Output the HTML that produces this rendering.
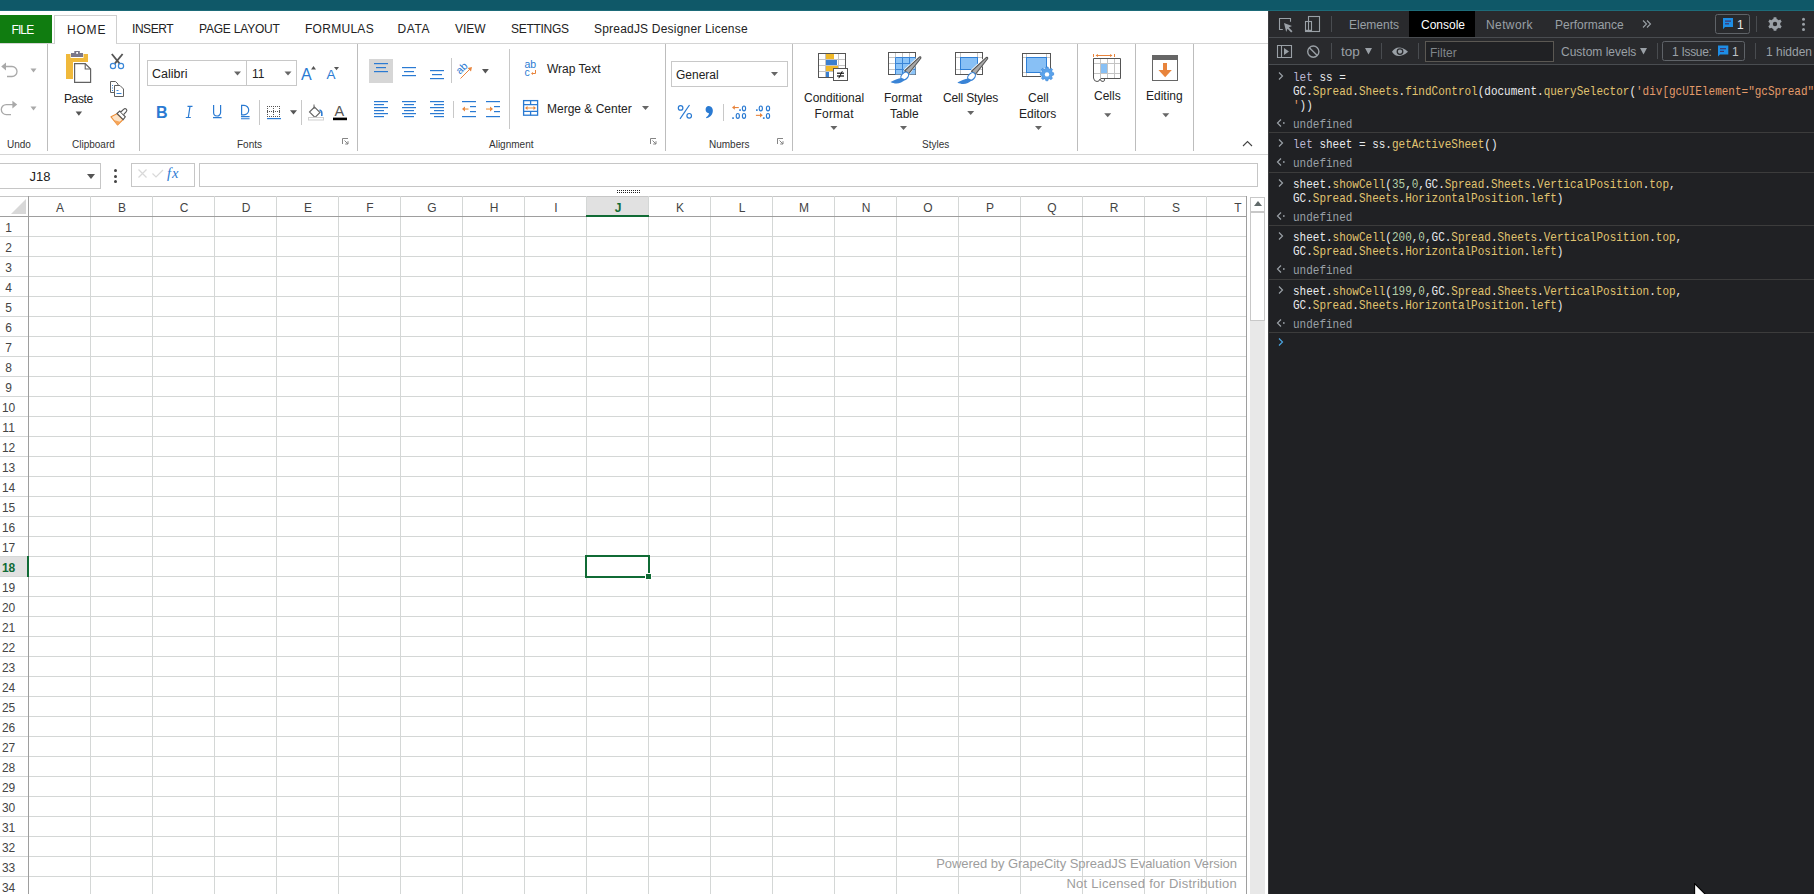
<!DOCTYPE html>
<html><head><meta charset="utf-8">
<style>
*{margin:0;padding:0;box-sizing:border-box}
html,body{width:1814px;height:894px;overflow:hidden;background:#fff;font-family:"Liberation Sans",sans-serif;position:relative}
.a{position:absolute}
.t{position:absolute;white-space:nowrap;line-height:1}
#topbar{left:0;top:0;width:1814px;height:11px;background:#0f5868;border-bottom:1px solid #1d6b79}
/* tabs */
.tab{position:absolute;top:22px;font-size:12px;color:#222;white-space:nowrap;line-height:14px}
.sep{position:absolute;width:1px;background:#bdbdbd}
.glbl{position:absolute;top:139px;font-size:10px;color:#333;white-space:nowrap;line-height:12px}
.lbl{position:absolute;font-size:12px;color:#222;white-space:nowrap;line-height:14px;margin-top:1px}
.arr{position:absolute;width:0;height:0;border-left:4px solid transparent;border-right:4px solid transparent;border-top:4px solid #666}
.colh{position:absolute;top:197px;height:19px;font-size:12px;color:#444;text-align:center;line-height:19px;padding-top:2px}
.rowh{position:absolute;left:0;width:17.2px;text-align:center;font-size:12px;color:#444;line-height:20px;height:20px;padding-top:1.5px}
/* devtools */
#dt{left:1268px;top:11px;width:546px;height:883px;background:#202124}
.dtt{position:absolute;font-size:12px;color:#9aa0a6;white-space:nowrap;line-height:14px}
.mono{position:absolute;font-family:"Liberation Mono",monospace;font-size:12.4px;line-height:14px;white-space:pre;color:#e8eaed;transform:scaleX(0.887);transform-origin:0 0;margin-top:0.7px}
.kw{color:#bcb6d2}.pr{color:#e0c470}.st{color:#e39b6a}.nu{color:#b5cea8}.un{color:#9aa0a6}
</style></head><body>
<div id="topbar" class="a"></div>

<!-- Tabs -->
<div class="a" style="left:0;top:15px;width:52px;height:28px;background:#107c10"></div>
<div class="tab" style="top:23px;left:11.5px;color:#fff;letter-spacing:-0.9px">FILE</div>
<div class="a" style="left:54px;top:15px;width:63px;height:29px;border:1px solid #cfcfcf;border-bottom:none;background:#fff"></div>
<div class="a" style="left:0;top:43px;width:54px;height:1px;background:#d4d4d4"></div>
<div class="a" style="left:116px;top:43px;width:1152px;height:1px;background:#d4d4d4"></div>
<div class="tab" style="top:23px;left:67px;letter-spacing:0.8px">HOME</div>
<div class="tab" style="left:132px;letter-spacing:-0.45px">INSERT</div>
<div class="tab" style="left:199px;letter-spacing:-0.2px">PAGE LAYOUT</div>
<div class="tab" style="left:305px;letter-spacing:0.28px">FORMULAS</div>
<div class="tab" style="left:397.5px;letter-spacing:0.6px">DATA</div>
<div class="tab" style="left:455px">VIEW</div>
<div class="tab" style="left:511px;letter-spacing:-0.28px">SETTINGS</div>
<div class="tab" style="left:594px;letter-spacing:0.2px">SpreadJS Designer License</div>

<!-- Ribbon body -->
<div class="a" style="left:0;top:154px;width:1268px;height:1px;background:#d4d4d4"></div>
<div class="sep" style="left:47px;top:44px;height:107px"></div>
<div class="sep" style="left:139px;top:44px;height:107px"></div>
<div class="sep" style="left:357px;top:44px;height:107px"></div>
<div class="sep" style="left:665px;top:44px;height:107px"></div>
<div class="sep" style="left:792px;top:44px;height:107px"></div>
<div class="sep" style="left:1077px;top:44px;height:107px"></div>
<div class="sep" style="left:1135px;top:44px;height:107px"></div>
<div class="sep" style="left:1193px;top:44px;height:107px"></div>
<div class="glbl" style="left:7px">Undo</div>
<div class="glbl" style="left:72px">Clipboard</div>
<div class="glbl" style="left:237px">Fonts</div>
<div class="glbl" style="left:489px">Alignment</div>
<div class="glbl" style="left:709px">Numbers</div>
<div class="glbl" style="left:922px">Styles</div>

<svg class="a" style="left:0;top:0" width="1268" height="155">
<defs>
<marker id="ah" markerWidth="4" markerHeight="4" refX="2" refY="2" orient="auto"><path d="M0,0 L4,2 L0,4z" fill="#e8843c"/></marker>
</defs>
<!-- Undo -->
<g fill="#a9a9a9" stroke="none">
<path d="M1.2,66.5 L6,62.6 L6,70.4z"/>
<path d="M30.5,68.5 h6 l-3,4z"/>
<path d="M17.2,104.6 L12.4,100.7 L12.4,108.5z"/>
<path d="M30.5,106.5 h6 l-3,4z"/>
</g>
<g fill="none" stroke="#a9a9a9" stroke-width="1.3">
<path d="M5.5,66.5 H12 A5,5 0 0 1 12,76.5 H7"/>
<path d="M13,104.6 H6.3 A5,5 0 0 0 6.3,114.6 H11"/>
</g>
<!-- Paste -->
<path d="M66,54 H70.5 V58 H83.5 V54 H88 V62 H73 V79 H66z" fill="#f0b93b"/>
<path d="M71,53.1 h12 v3.8 h-12z M74.3,51 h5.5 v2.5 h-5.5z" fill="#7b7889"/>
<rect x="76.2" y="52" width="1.8" height="1.8" fill="#fff"/>
<path d="M74.6,63.6 H85.2 L90.6,69 V82.4 H74.6z" fill="#fff" stroke="#626262" stroke-width="1.2"/>
<path d="M85.2,63.6 V69 H90.6" fill="none" stroke="#626262" stroke-width="1.1"/>
<path d="M75.6,111.5 h6.5 l-3.25,4.2z" fill="#555"/>
<!-- Cut -->
<g fill="none" stroke="#555" stroke-width="1.8">
<path d="M111.8,54 L119.6,63.6"/><path d="M122.6,54 L114.8,63.6"/>
</g>
<g fill="none" stroke="#3a87d8" stroke-width="1.2">
<circle cx="113" cy="66" r="2.6"/><circle cx="121" cy="66" r="2.6"/>
</g>
<!-- Copy -->
<g fill="#fff" stroke="#5f5f5f" stroke-width="1">
<path d="M110.5,81.5 H115.5 L118,84 V92.5 H110.5z"/>
<path d="M114.5,85.5 H120 L123.5,89 V96.5 H114.5z"/>
</g>
<g fill="#3a87d8"><rect x="112" y="85" width="1" height="1"/><rect x="112" y="87.5" width="1" height="1"/><rect x="112" y="90" width="1" height="1"/>
<rect x="116.5" y="90" width="2" height="1"/><rect x="116.5" y="93" width="5" height="1"/></g>
<!-- Format painter -->
<path d="M117,113.8 L111,116.8 L117.5,125 L123,119.6 Z" fill="#fde3c6" stroke="#ec8f3a" stroke-width="1.1" stroke-linejoin="round"/>
<path d="M113.6,120 L121,122 L117.5,125z" fill="#f5a55a"/>
<path d="M117,113.5 L119.8,111 L125.3,116.8 L123.2,119.6 Z" fill="#fff" stroke="#555" stroke-width="1.1"/>
<path d="M120.8,112 L123.8,109.2 A1.7,1.7 0 0 1 126.3,111.6 L123.6,114.6" fill="#fff" stroke="#555" stroke-width="1.1"/>
<!-- Font boxes -->
<rect x="147.5" y="60.5" width="149" height="25" fill="#fff" stroke="#c8c8c8"/>
<line x1="246.5" y1="60.5" x2="246.5" y2="85.5" stroke="#c8c8c8"/>
<path d="M234,71.5 h7 l-3.5,4z" fill="#666"/>
<path d="M284.5,71.5 h7 l-3.5,4z" fill="#666"/>
<!-- A+ A- -->
<text x="301" y="79.6" font-family="Liberation Sans" font-size="16" fill="#2a7ad2">A</text>
<path d="M311,69.5 L313.5,66 L316,69.5z" fill="#555"/>
<text x="326.5" y="78.9" font-family="Liberation Sans" font-size="13.5" fill="#2a7ad2">A</text>
<path d="M334,67 L339,67 L336.5,70.2z" fill="#555"/>
<!-- B I U D -->
<text x="156" y="117.9" font-family="Liberation Sans" font-weight="bold" font-size="16" fill="#2a7ad2">B</text>
<g stroke="#2a7ad2" fill="none" stroke-width="1.2">
<path d="M187.5,106.3 H192.5 M185.8,117.5 H190.8 M190,106.3 L188.3,117.5"/>
<path d="M213.6,105 V112.5 A3.5,3.5 0 0 0 220.6,112.5 V105"/>
<path d="M213,117.6 H221.6" stroke-width="1.3"/>
<path d="M241.6,105.4 H244 A4.7,4.7 0 0 1 244,114.8 H241.6z"/>
<path d="M241,116.6 H249.6 M241,118.8 H249.6" stroke-width="1.1"/>
</g>
<line x1="259.5" y1="100" x2="259.5" y2="125" stroke="#c8c8c8"/>
<!-- border icon -->
<g fill="#555">
<rect x="267" y="106" width="1" height="1"/><rect x="267" y="108" width="1" height="1"/><rect x="267" y="110" width="1" height="1"/><rect x="267" y="111" width="1" height="1"/><rect x="267" y="112" width="1" height="1"/><rect x="267" y="114" width="1" height="1"/><rect x="267" y="116" width="1" height="1"/><rect x="269" y="106" width="1" height="1"/><rect x="269" y="111" width="1" height="1"/><rect x="269" y="116" width="1" height="1"/><rect x="271" y="106" width="1" height="1"/><rect x="271" y="111" width="1" height="1"/><rect x="271" y="116" width="1" height="1"/><rect x="273" y="106" width="1" height="1"/><rect x="273" y="108" width="1" height="1"/><rect x="273" y="110" width="1" height="1"/><rect x="273" y="111" width="1" height="1"/><rect x="273" y="112" width="1" height="1"/><rect x="273" y="114" width="1" height="1"/><rect x="273" y="116" width="1" height="1"/><rect x="275" y="106" width="1" height="1"/><rect x="275" y="111" width="1" height="1"/><rect x="275" y="116" width="1" height="1"/><rect x="277" y="106" width="1" height="1"/><rect x="277" y="111" width="1" height="1"/><rect x="277" y="116" width="1" height="1"/><rect x="279" y="106" width="1" height="1"/><rect x="279" y="108" width="1" height="1"/><rect x="279" y="110" width="1" height="1"/><rect x="279" y="111" width="1" height="1"/><rect x="279" y="112" width="1" height="1"/><rect x="279" y="114" width="1" height="1"/><rect x="279" y="116" width="1" height="1"/></g>
<rect x="267" y="118" width="14" height="1.2" fill="#2a7ad2"/>
<path d="M290,110.3 h7 l-3.5,4.2z" fill="#555"/>
<line x1="301.5" y1="100" x2="301.5" y2="125" stroke="#c8c8c8"/>
<!-- fill color -->
<path d="M309.5,112 L314.5,107 L320,112.5 L315,117.5z" fill="#fff" stroke="#666" stroke-width="1.1"/>
<path d="M314,104.5 v4.5" stroke="#666" stroke-width="1"/>
<path d="M319.5,110 Q322.5,110.5 321.8,116" fill="none" stroke="#2a7ad2" stroke-width="1.6"/>
<rect x="308.5" y="117.5" width="15" height="2.5" fill="#fff" stroke="#cfcfcf" stroke-width="1"/>
<!-- font color -->
<text x="334.5" y="116" font-family="Liberation Sans" font-size="14.5" fill="#555">A</text>
<rect x="333" y="117.6" width="14" height="2.6" fill="#000"/>
<!-- launcher icons -->
<g fill="none" stroke="#777" stroke-width="0.9">
<path d="M342.5,144 V138.5 H348 M344.5,140.5 L347.8,143.8 M345.2,144 H348 V141.2"/>
<path d="M650.5,144 V138.5 H656 M652.5,140.5 L655.8,143.8 M653.2,144 H656 V141.2"/>
<path d="M777.5,144 V138.5 H783 M779.5,140.5 L782.8,143.8 M780.2,144 H783 V141.2"/>
</g>
<!-- Alignment -->
<rect x="369" y="59" width="24" height="24" fill="#d6d6d6"/>
<g fill="#2a7ad2">
<rect x="374" y="63" width="14" height="1.2"/><rect x="376" y="67" width="10" height="1.2"/><rect x="374" y="71" width="14" height="1.2"/>
<rect x="402" y="67" width="14" height="1.2"/><rect x="404" y="71" width="10" height="1.2"/><rect x="402" y="75" width="14" height="1.2"/>
<rect x="430" y="70" width="14" height="1.2"/><rect x="432" y="74" width="10" height="1.2"/><rect x="430" y="78" width="14" height="1.2"/>
<rect x="374" y="101" width="14" height="1.2"/><rect x="374" y="104" width="10" height="1.2"/><rect x="374" y="107" width="14" height="1.2"/><rect x="374" y="110" width="10" height="1.2"/><rect x="374" y="113" width="14" height="1.2"/><rect x="374" y="116" width="10" height="1.2"/>
<rect x="402" y="101" width="14" height="1.2"/><rect x="404" y="104" width="10" height="1.2"/><rect x="402" y="107" width="14" height="1.2"/><rect x="404" y="110" width="10" height="1.2"/><rect x="402" y="113" width="14" height="1.2"/><rect x="404" y="116" width="10" height="1.2"/>
<rect x="430" y="101" width="14" height="1.2"/><rect x="434" y="104" width="10" height="1.2"/><rect x="430" y="107" width="14" height="1.2"/><rect x="434" y="110" width="10" height="1.2"/><rect x="430" y="113" width="14" height="1.2"/><rect x="434" y="116" width="10" height="1.2"/>
<rect x="462" y="101" width="14" height="1.2"/><rect x="470" y="106" width="6" height="1.2"/><rect x="470" y="111" width="6" height="1.2"/><rect x="462" y="116" width="14" height="1.2"/>
<rect x="486" y="101" width="14" height="1.2"/><rect x="494" y="106" width="6" height="1.2"/><rect x="494" y="111" width="6" height="1.2"/><rect x="486" y="116" width="14" height="1.2"/>
</g>
<g fill="#e8843c">
<path d="M462,109 L465,106.5 V111.5z"/><rect x="464.5" y="108.4" width="4" height="1.3" fill="#f3a65a"/>
<path d="M493,109 L490,106.5 V111.5z"/><rect x="486" y="108.4" width="4.5" height="1.3" fill="#f3a65a"/>
</g>
<line x1="451.5" y1="58" x2="451.5" y2="83" stroke="#c8c8c8"/>
<line x1="453.5" y1="101" x2="453.5" y2="118" stroke="#c8c8c8"/>
<line x1="509.5" y1="49" x2="509.5" y2="129" stroke="#c8c8c8"/>
<!-- orientation -->
<text x="0" y="0" font-family="Liberation Sans" font-size="10.5" fill="#2a7ad2" transform="translate(460,74.8) rotate(-45)">ab</text>
<path d="M460.5,78.5 L471,68" stroke="#e8843c" stroke-width="1"/>
<path d="M472,67 L467.6,68 L471,71.4z" fill="#e8843c"/>
<path d="M482,69 h6.8 l-3.4,4.6z" fill="#555"/>
<!-- wrap text icon -->
<text x="524.5" y="68.4" font-family="Liberation Sans" font-size="10.5" fill="#2a7ad2">ab</text>
<text x="524.5" y="76" font-family="Liberation Sans" font-size="10.5" fill="#2a7ad2">c</text>
<path d="M535.5,70 V73.5 H532" fill="none" stroke="#e8843c" stroke-width="1"/>
<path d="M531,73.5 L533,72 V75z" fill="#e8843c"/>
<!-- merge icon -->
<g fill="none" stroke="#2a7ad2" stroke-width="1.3">
<rect x="523.6" y="100.6" width="14" height="14.6"/>
<path d="M523.6,104.6 H537.6 M523.6,111.4 H537.6 M530.6,100.6 V104.6 M530.6,111.4 V115.2"/>
</g>
<path d="M526,108 H535" stroke="#f3a65a" stroke-width="1.2"/>
<path d="M525,108 L527.5,106 V110z M536,108 L533.5,106 V110z" fill="#e8843c"/>
<path d="M642,106 h7 l-3.5,4z" fill="#666"/>
<!-- Numbers -->
<rect x="671.5" y="61.5" width="116" height="25" fill="#fff" stroke="#c8c8c8"/>
<path d="M771,72 h7 l-3.5,4z" fill="#666"/>
<g fill="none" stroke="#2a7ad2" stroke-width="1.2">
<circle cx="680.6" cy="107.9" r="2.3"/><circle cx="689.2" cy="115.8" r="2.3"/>
<path d="M689.5,105 L680,118.8"/>
</g>
<path d="M708.6,106 C712.5,106 713.5,110 712.5,113 C711.8,115.3 709.5,117.5 706.5,118.3 L706,117.3 C707.8,116.2 708.8,115 709,113.2 C706.8,113.3 705.6,111.6 705.6,109.6 C705.6,107.4 706.9,106 708.6,106z" fill="#2a7ad2"/>
<line x1="723.5" y1="104" x2="723.5" y2="121" stroke="#c8c8c8"/>
<g fill="none" stroke="#2a7ad2" stroke-width="1.15"><ellipse cx="744" cy="108.4" rx="1.6" ry="2.4"/><ellipse cx="737.8" cy="115.9" rx="1.6" ry="2.4"/><ellipse cx="744" cy="115.9" rx="1.6" ry="2.4"/><ellipse cx="760.8" cy="108.4" rx="1.6" ry="2.4"/><ellipse cx="768" cy="108.4" rx="1.6" ry="2.4"/><ellipse cx="768" cy="115.9" rx="1.6" ry="2.4"/></g><g fill="#2a7ad2"><rect x="739.2" y="109.3" width="1.7" height="1.6"/><rect x="732.2" y="117.3" width="1.7" height="1.6"/><rect x="756" y="109.3" width="1.7" height="1.6"/><rect x="762.9" y="117.3" width="1.7" height="1.6"/></g><g fill="#e8843c"><path d="M732,107.5 L734.8,105.3 V109.7z"/><rect x="734" y="107" width="4.8" height="1.1"/><path d="M762.8,115.3 L760,113.1 V117.5z"/><rect x="755.9" y="114.8" width="4.8" height="1.1"/></g>
<!-- Styles: Conditional format -->
<rect x="818.5" y="53.5" width="27" height="24" fill="#fff" stroke="#555" stroke-width="1"/>
<g stroke="#c4c4c4" stroke-width="1">
<path d="M825.5,54 V77 M838.5,54 V77 M819,59.5 H845 M819,65.5 H845 M819,71.5 H845"/>
</g>
<rect x="826" y="54" width="8" height="5" fill="#f0b929"/>
<rect x="826" y="60" width="11" height="5" fill="#3a7fd0"/>
<rect x="826" y="66" width="12" height="5" fill="#f0b929"/>
<rect x="826" y="72" width="3" height="5" fill="#3a7fd0"/>
<rect x="833.5" y="68.5" width="14" height="12" fill="#fff" stroke="#555" stroke-width="1"/>
<rect x="837" y="72.6" width="7" height="1.2" fill="#111"/><rect x="837" y="75.4" width="7" height="1.2" fill="#111"/><path d="M842.3,71.2 L838.8,78.2" stroke="#111" stroke-width="1"/>
<!-- Format Table -->
<rect x="888.5" y="52.5" width="27" height="22" fill="#fff" stroke="#555" stroke-width="1"/>
<rect x="895.5" y="57.5" width="20" height="17" fill="#8cc4f8"/>
<g stroke="#c4c4c4" stroke-width="1"><path d="M895.5,53 V58 M902.5,53 V58 M909.5,53 V58 M889,57.5 H895 M889,63.5 H895 M889,69.5 H895"/></g>
<g stroke="#3a84d6" stroke-width="1"><path d="M895.5,57.5 V74.5 M902.5,57.5 V74.5 M909.5,57.5 V74.5 M895.5,57.5 H915.5 M895.5,63.5 H915.5 M895.5,69.5 H915.5"/></g>
<g transform="translate(904,76.5) scale(1.2)">
<path d="M-0.2,-5.6 L12.6,-17.4 Q15.4,-18.4 14.6,-15.6 L4.6,-1.6z" fill="#fff"/>
<path d="M0.6,-4.8 L12.8,-16.2 Q14.4,-16.8 14,-15.2 L3.8,-2.2z" fill="#a9a9a9" stroke="#555" stroke-width="0.9" stroke-linejoin="round"/>
<ellipse cx="0.6" cy="-0.4" rx="3.7" ry="2.6" transform="rotate(-45 0.6 -0.4)" fill="#fff" stroke="#3a84d6" stroke-width="1"/>
<path d="M-1.8,1.2 C-5,1.6 -8.5,3 -11.2,4.6 C-7.5,6.6 -2.5,6.4 1,2.6z" fill="#3a84d6"/>
</g>
<!-- Cell styles -->
<rect x="955.5" y="52.5" width="27" height="22" fill="#fff" stroke="#555" stroke-width="1"/>
<g stroke="#c4c4c4" stroke-width="1"><path d="M960.5,53 V74 M977.5,53 V74 M956,57.5 H982 M956,69.5 H982"/></g>
<rect x="960.5" y="57.5" width="17" height="12" fill="#88c0f5" stroke="#2f7fd6" stroke-width="1"/>
<g transform="translate(970.8,77) scale(1.2)">
<path d="M-0.2,-5.6 L12.6,-17.4 Q15.4,-18.4 14.6,-15.6 L4.6,-1.6z" fill="#fff"/>
<path d="M0.6,-4.8 L12.8,-16.2 Q14.4,-16.8 14,-15.2 L3.8,-2.2z" fill="#a9a9a9" stroke="#555" stroke-width="0.9" stroke-linejoin="round"/>
<ellipse cx="0.6" cy="-0.4" rx="3.7" ry="2.6" transform="rotate(-45 0.6 -0.4)" fill="#fff" stroke="#3a84d6" stroke-width="1"/>
<path d="M-1.8,1.2 C-5,1.6 -8.5,3 -11.2,4.6 C-7.5,6.6 -2.5,6.4 1,2.6z" fill="#3a84d6"/>
</g>
<!-- Cell editors -->
<rect x="1022.5" y="53.5" width="28" height="23" fill="#fff" stroke="#555" stroke-width="1"/>
<g stroke="#c4c4c4" stroke-width="1"><path d="M1026.5,54 V76 M1046.5,54 V76 M1023,57.5 H1050 M1023,72.5 H1050"/></g>
<rect x="1026.5" y="57.5" width="20" height="15" fill="#88c0f5" stroke="#2f7fd6" stroke-width="1"/>
<g transform="translate(1047,74)">
<circle r="6.5" fill="#fff"/>
<g fill="#5aa2ea" stroke="#2f7fd6" stroke-width="0.6">
<path d="M-1.2,-6.3 H1.2 L1.6,-4.6 L3.2,-3.9 L4.6,-4.9 L5.9,-3.6 L4.9,-2.2 L5.6,-0.6 L7,-0.2 V2.2 L5.4,2.6 L4.8,4.1 L5.8,5.5 L4.1,7 L2.7,6 L1.2,6.6 L1,8.2 H-1.2 L-1.6,6.6 L-3,6 L-4.4,7 L-5.9,5.5 L-5,4.1 L-5.6,2.6 L-7,2.2 V-0.2 L-5.6,-0.6 L-5,-2.2 L-6,-3.6 L-4.6,-4.9 L-3.2,-3.9 L-1.6,-4.6z" transform="translate(0,-1) scale(0.95)"/>
</g>
<circle cx="0" cy="0.4" r="2.2" fill="#fff"/>
</g>
<!-- Cells -->
<g stroke="#e8843c" stroke-width="1"><path d="M1093.5,54 V57 M1114.5,54 V57 M1096,55.5 H1112"/></g>
<path d="M1095.5,55.5 L1098,54 V57z M1112.5,55.5 L1110,54 V57z" fill="#e8843c"/>
<g stroke="#c4c4c4" stroke-width="1"><path d="M1100.5,59 V78 M1107.5,59 V78 M1114.5,59 V78 M1094,63.5 H1120 M1094,73.5 H1120"/></g>
<rect x="1101" y="64" width="6" height="9" fill="#88c0f5"/>
<path d="M1093.5,78 V58.5 H1120.5 V78.5 H1100.5" fill="none" stroke="#555" stroke-width="1"/>
<path d="M1093.5,78 Q1094,81.5 1097,81.5 Q1099.5,81.5 1100,79 Q1100.5,81.5 1103,81.5 Q1105,81.5 1104.5,78.5" fill="none" stroke="#555" stroke-width="1"/>
<!-- Editing -->
<rect x="1152.5" y="55.5" width="25" height="25" fill="#fff" stroke="#666" stroke-width="1"/>
<rect x="1152" y="55" width="26" height="5" fill="#666"/>
<rect x="1163" y="63" width="4" height="7.5" fill="#e8843c"/>
<path d="M1158.5,70 H1171.8 L1165.15,77.2z" fill="#e8843c"/>
<!-- big button arrows -->
<g fill="#666">
<path d="M830.4,126 h7 l-3.5,4z"/>
<path d="M900,126 h7 l-3.5,4z"/>
<path d="M967.2,111 h7 l-3.5,4z"/>
<path d="M1035,126 h7 l-3.5,4z"/>
<path d="M1104.2,113.2 h7 l-3.5,4z"/>
<path d="M1162.3,113.2 h7 l-3.5,4z"/>
</g>
<!-- collapse caret -->
<path d="M1243,146 L1247.5,141.5 L1252,146" fill="none" stroke="#444" stroke-width="1.1"/>
</svg>


<div class="lbl" style="left:64px;top:91px;letter-spacing:-0.4px">Paste</div>
<div class="lbl" style="left:152px;top:66px;font-size:12.5px">Calibri</div>
<div class="lbl" style="left:252px;top:66px">11</div>
<div class="lbl" style="left:547px;top:61px">Wrap Text</div>
<div class="lbl" style="left:547px;top:101px">Merge &amp; Center</div>
<div class="lbl" style="left:676px;top:67px">General</div>
<div class="lbl" style="left:804px;top:90px">Conditional</div>
<div class="lbl" style="left:814.5px;top:106px;letter-spacing:0.2px">Format</div>
<div class="lbl" style="left:884px;top:90px">Format</div>
<div class="lbl" style="left:890px;top:106px">Table</div>
<div class="lbl" style="left:943px;top:90px;letter-spacing:-0.15px">Cell Styles</div>
<div class="lbl" style="left:1028px;top:90px">Cell</div>
<div class="lbl" style="left:1019px;top:106px">Editors</div>
<div class="lbl" style="left:1094px;top:88px">Cells</div>
<div class="lbl" style="left:1146px;top:88px">Editing</div>
<svg class="a" style="left:131px;top:163px" width="64" height="24">
<path d="M7.5,6.5 L15.5,14.5 M15.5,6.5 L7.5,14.5" stroke="#d9d9d9" stroke-width="1.2"/>
<path d="M21.5,10.5 L25,14 L32,7" fill="none" stroke="#d9d9d9" stroke-width="1.2"/>
<text x="36" y="14.6" font-family="Liberation Serif" font-style="italic" font-size="14.5" letter-spacing="1" fill="#2a7ad2">fx</text>
</svg>


<!-- Formula bar -->
<div class="a" style="left:-1px;top:163px;width:102px;height:26px;border:1px solid #c6c6c6"></div>
<div class="lbl" style="left:29.5px;top:168.5px;color:#222;font-size:13px">J18</div>
<div class="arr" style="left:87px;top:174px;border-top-color:#555;border-top-width:5px"></div>
<div class="a" style="left:114px;top:169px;width:3px;height:3px;border-radius:2px;background:#444"></div>
<div class="a" style="left:114px;top:174.5px;width:3px;height:3px;border-radius:2px;background:#444"></div>
<div class="a" style="left:114px;top:180px;width:3px;height:3px;border-radius:2px;background:#444"></div>
<div class="a" style="left:131px;top:163px;width:64px;height:24px;border:1px solid #c6c6c6"></div>
<div class="a" style="left:199px;top:163px;width:1059px;height:24px;border:1px solid #c6c6c6"></div>

<!-- Grid -->
<svg class="a" style="left:0;top:0" width="700" height="200"><g fill="#222"><rect x="617" y="190" width="1" height="1"/><rect x="617" y="192" width="1" height="1"/><rect x="619" y="190" width="1" height="1"/><rect x="619" y="192" width="1" height="1"/><rect x="621" y="190" width="1" height="1"/><rect x="621" y="192" width="1" height="1"/><rect x="623" y="190" width="1" height="1"/><rect x="623" y="192" width="1" height="1"/><rect x="625" y="190" width="1" height="1"/><rect x="625" y="192" width="1" height="1"/><rect x="627" y="190" width="1" height="1"/><rect x="627" y="192" width="1" height="1"/><rect x="629" y="190" width="1" height="1"/><rect x="629" y="192" width="1" height="1"/><rect x="631" y="190" width="1" height="1"/><rect x="631" y="192" width="1" height="1"/><rect x="633" y="190" width="1" height="1"/><rect x="633" y="192" width="1" height="1"/><rect x="635" y="190" width="1" height="1"/><rect x="635" y="192" width="1" height="1"/><rect x="637" y="190" width="1" height="1"/><rect x="637" y="192" width="1" height="1"/><rect x="639" y="190" width="1" height="1"/><rect x="639" y="192" width="1" height="1"/></g></svg>
<div class="a" style="left:0;top:196px;width:1247px;height:1px;background:#c6c6c6"></div>
<div class="a" style="left:0;top:216px;width:1247px;height:678px;background-image:repeating-linear-gradient(to bottom,#d4d7d6 0,#d4d7d6 1px,transparent 1px,transparent 20px)"></div>
<div class="a" style="left:28px;top:196px;width:1219px;height:698px;background-image:repeating-linear-gradient(to right,#d4d7d6 0,#d4d7d6 1px,transparent 1px,transparent 62px)"></div>
<div class="a" style="left:28px;top:196px;width:1px;height:698px;background:#9e9e9e"></div>
<div class="a" style="left:0;top:216px;width:1247px;height:1px;background:#9e9e9e"></div>
<div class="a" style="left:1246px;top:196px;width:1px;height:698px;background:#9e9e9e"></div>
<svg class="a" style="left:0;top:196px" width="28" height="21"><polygon points="11,18 26,18 26,3" fill="#d8d8d8"/></svg>
<div class="colh" style="left:29px;width:62px">A</div>
<div class="colh" style="left:91px;width:62px">B</div>
<div class="colh" style="left:153px;width:62px">C</div>
<div class="colh" style="left:215px;width:62px">D</div>
<div class="colh" style="left:277px;width:62px">E</div>
<div class="colh" style="left:339px;width:62px">F</div>
<div class="colh" style="left:401px;width:62px">G</div>
<div class="colh" style="left:463px;width:62px">H</div>
<div class="colh" style="left:525px;width:62px">I</div>
<div class="a" style="left:587px;top:197px;width:61px;height:18px;background:#e1e1e1"></div>
<div class="a" style="left:586px;top:215px;width:63px;height:2px;background:#106b35"></div>
<div class="colh" style="left:587px;width:62px;color:#106b35;font-weight:bold">J</div>
<div class="colh" style="left:649px;width:62px">K</div>
<div class="colh" style="left:711px;width:62px">L</div>
<div class="colh" style="left:773px;width:62px">M</div>
<div class="colh" style="left:835px;width:62px">N</div>
<div class="colh" style="left:897px;width:62px">O</div>
<div class="colh" style="left:959px;width:62px">P</div>
<div class="colh" style="left:1021px;width:62px">Q</div>
<div class="colh" style="left:1083px;width:62px">R</div>
<div class="colh" style="left:1145px;width:62px">S</div>
<div class="colh" style="left:1207px;width:62px">T</div>
<div class="rowh" style="top:216px">1</div>
<div class="rowh" style="top:236px">2</div>
<div class="rowh" style="top:256px">3</div>
<div class="rowh" style="top:276px">4</div>
<div class="rowh" style="top:296px">5</div>
<div class="rowh" style="top:316px">6</div>
<div class="rowh" style="top:336px">7</div>
<div class="rowh" style="top:356px">8</div>
<div class="rowh" style="top:376px">9</div>
<div class="rowh" style="top:396px">10</div>
<div class="rowh" style="top:416px">11</div>
<div class="rowh" style="top:436px">12</div>
<div class="rowh" style="top:456px">13</div>
<div class="rowh" style="top:476px">14</div>
<div class="rowh" style="top:496px">15</div>
<div class="rowh" style="top:516px">16</div>
<div class="rowh" style="top:536px">17</div>
<div class="a" style="left:0;top:557px;width:27px;height:19px;background:#e1e1e1"></div>
<div class="a" style="left:27px;top:556px;width:2px;height:21px;background:#106b35"></div>
<div class="rowh" style="top:556px;color:#106b35;font-weight:bold">18</div>
<div class="rowh" style="top:576px">19</div>
<div class="rowh" style="top:596px">20</div>
<div class="rowh" style="top:616px">21</div>
<div class="rowh" style="top:636px">22</div>
<div class="rowh" style="top:656px">23</div>
<div class="rowh" style="top:676px">24</div>
<div class="rowh" style="top:696px">25</div>
<div class="rowh" style="top:716px">26</div>
<div class="rowh" style="top:736px">27</div>
<div class="rowh" style="top:756px">28</div>
<div class="rowh" style="top:776px">29</div>
<div class="rowh" style="top:796px">30</div>
<div class="rowh" style="top:816px">31</div>
<div class="rowh" style="top:836px">32</div>
<div class="rowh" style="top:856px">33</div>
<div class="rowh" style="top:876px">34</div>
<div class="a" style="left:585px;top:555px;width:65px;height:23px;border:2px solid #106b35"></div>
<div class="a" style="left:645px;top:573px;width:7px;height:7px;background:#106b35;border:1px solid #fff"></div>
<div class="a" style="left:1247px;top:196px;width:21px;height:698px;background:#fff"></div>
<div class="a" style="left:1250px;top:197px;width:15px;height:697px;background:#e8e8e8"></div>
<div class="a" style="left:1250px;top:197px;width:15px;height:15px;background:#fff;border:1px solid #c8c8c8"></div>
<div class="a" style="left:1254px;top:201px;width:0;height:0;border-left:4px solid transparent;border-right:4px solid transparent;border-bottom:5px solid #606a6a"></div>
<div class="a" style="left:1250px;top:212px;width:15px;height:109px;background:#fff;border:1px solid #c8c8c8"></div>
<div class="t" style="left:837px;top:856px;font-size:13px;color:#9d9d9d;line-height:15px;text-align:right;width:400px;letter-spacing:-0.04px">Powered by GrapeCity SpreadJS Evaluation Version</div>
<div class="t" style="left:837px;top:876px;font-size:13px;color:#9d9d9d;line-height:15px;text-align:right;width:400px;letter-spacing:0.25px">Not Licensed for Distribution</div>

<!-- Devtools -->
<div id="dt" class="a"></div>
<div class="a" style="left:1268px;top:11px;width:546px;height:54px;background:#292a2d"></div>
<div class="a" style="left:1268px;top:37px;width:546px;height:1px;background:#494c50"></div>
<div class="a" style="left:1268px;top:64px;width:546px;height:1px;background:#494c50"></div>
<div class="a" style="left:1268px;top:11px;width:1px;height:883px;background:#3c3d40"></div>
<div class="a" style="left:1409px;top:11px;width:66px;height:26px;background:#000"></div>
<svg class="a" style="left:1268px;top:11px" width="546" height="54">
<g fill="none" stroke="#9aa0a6" stroke-width="1.1">
<path d="M14.8,18.5 H11.5 V7.5 H22.5 V10.8"/>
<rect x="40.5" y="5.5" width="11" height="15"/>
<rect x="37.5" y="10.5" width="6" height="10"/>
<path d="M9.5,34.5 H23.5 V46.5 H9.5z M13.5,34.5 V46.5"/>
<circle cx="45.3" cy="40.6" r="5.6" stroke-width="1.4"/>
<path d="M41.4,36.7 L49.2,44.5" stroke-width="1.4"/>
</g>
<g fill="#9aa0a6">
<path d="M16,12 L24,15 L20.8,16.5 L24.5,20.2 L23.2,21.5 L19.5,17.8 L18.2,21z"/>
<rect x="37.5" y="18.8" width="6" height="2"/>
<path d="M16,37 L21,40.5 L16,44z"/>
<path d="M97,37 h7 l-3.5,6.5z"/>
<path d="M124,40.8 C127,36 133,34.5 140,40.8 C133,47 127,46 124,40.8z"/>
</g>
<circle cx="132" cy="40.6" r="2.8" fill="none" stroke="#292a2d" stroke-width="1.3"/>
<g stroke="#494c50" stroke-width="1">
<path d="M63.5,5 V21 M63.5,32 V48 M113.5,32 V48 M150.5,32 V48 M389.5,32 V48 M487.5,32 V48 M488.5,5 V21"/>
</g>
<g fill="none" stroke="#9aa0a6" stroke-width="1.1">
<path d="M375,9.5 L378.5,13 L375,16.5 M379,9.5 L382.5,13 L379,16.5"/>
</g>
<rect x="447.5" y="3.5" width="34" height="19" rx="2" fill="none" stroke="#5f6368"/>
<rect x="394.5" y="30.5" width="82" height="19" rx="2" fill="none" stroke="#5f6368"/>
<rect x="157.5" y="30.5" width="128" height="20" fill="#202124" stroke="#5b5853"/>
<g fill="#1e8ee6">
<path d="M455,7 H465 V16 H457 L455,18.3z"/>
<path d="M450,34.6 H460.3 V43.6 H452 L450,45.6z"/>
</g>
<g fill="#40356a">
<rect x="457" y="9.5" width="6" height="1.2"/><rect x="457" y="12.2" width="4" height="1.2"/>
<rect x="452" y="37.1" width="6" height="1.2"/><rect x="452" y="39.8" width="4" height="1.2"/>
</g>
<g transform="translate(507,13)" fill="#9aa0a6">
<path d="M-1.3,-6.8 H1.3 L1.7,-4.9 A5,5 0 0 1 3.6,-3.8 L5.4,-4.5 L6.7,-2.3 L5.2,-1 A5,5 0 0 1 5.2,1 L6.7,2.3 L5.4,4.5 L3.6,3.8 A5,5 0 0 1 1.7,4.9 L1.3,6.8 H-1.3 L-1.7,4.9 A5,5 0 0 1 -3.6,3.8 L-5.4,4.5 L-6.7,2.3 L-5.2,1 A5,5 0 0 1 -5.2,-1 L-6.7,-2.3 L-5.4,-4.5 L-3.6,-3.8 A5,5 0 0 1 -1.7,-4.9z"/>
</g>
<circle cx="507" cy="13" r="2.2" fill="#292a2d"/>
<g fill="#9aa0a6"><circle cx="535.5" cy="8.2" r="1.5"/><circle cx="535.5" cy="13.3" r="1.5"/><circle cx="535.5" cy="18.5" r="1.5"/></g>
<path d="M372,37 h7 l-3.5,6.5z" fill="#9aa0a6"/>
</svg>
<div class="dtt" style="left:1349px;top:18px">Elements</div>
<div class="dtt" style="left:1421px;top:18px;color:#fff">Console</div>
<div class="dtt" style="left:1486px;top:18px;letter-spacing:0.4px">Network</div>
<div class="dtt" style="left:1555px;top:18px">Performance</div>
<div class="dtt" style="left:1737px;top:18px;color:#e8eaed">1</div>
<div class="dtt" style="left:1341px;top:44.5px;font-size:13.5px">top</div>
<div class="dtt" style="left:1430px;top:46px;color:#80868b">Filter</div>
<div class="dtt" style="left:1561px;top:45px">Custom levels</div>
<div class="dtt" style="left:1672px;top:45px;letter-spacing:-0.3px">1 Issue:</div>
<div class="dtt" style="left:1732px;top:45px;color:#bdc1c6">1</div>
<div class="dtt" style="left:1766px;top:45px">1 hidden</div>
<!-- console -->
<div class="a" style="left:1268px;top:132px;width:546px;height:1px;background:#3c3c3c"></div>
<div class="a" style="left:1268px;top:172px;width:546px;height:1px;background:#3c3c3c"></div>
<div class="a" style="left:1268px;top:225px;width:546px;height:1px;background:#3c3c3c"></div>
<div class="a" style="left:1268px;top:279px;width:546px;height:1px;background:#3c3c3c"></div>
<div class="a" style="left:1268px;top:332px;width:546px;height:1px;background:#3c3c3c"></div>
<div class="mono" style="left:1293px;top:70px"><span class="kw">let</span> ss =</div>
<div class="mono" style="left:1293px;top:84px">GC.<span class="pr">Spread</span>.<span class="pr">Sheets</span>.<span class="pr">findControl</span>(document.<span class="pr">querySelector</span>(<span class="st">'div[gcUIElement="gcSpread"</span></div>
<div class="mono" style="left:1293px;top:98px"><span class="st">'</span>))</div>
<div class="mono un" style="left:1293px;top:117px">undefined</div>
<div class="mono" style="left:1293px;top:137px"><span class="kw">let</span> sheet = ss.<span class="pr">getActiveSheet</span>()</div>
<div class="mono un" style="left:1293px;top:156px">undefined</div>
<div class="mono" style="left:1293px;top:177px">sheet.<span class="pr">showCell</span>(<span class="nu">35</span>,<span class="nu">0</span>,GC.<span class="pr">Spread</span>.<span class="pr">Sheets</span>.<span class="pr">VerticalPosition</span>.<span class="pr">top</span>,</div>
<div class="mono" style="left:1293px;top:191px">GC.<span class="pr">Spread</span>.<span class="pr">Sheets</span>.<span class="pr">HorizontalPosition</span>.<span class="pr">left</span>)</div>
<div class="mono un" style="left:1293px;top:210px">undefined</div>
<div class="mono" style="left:1293px;top:230px">sheet.<span class="pr">showCell</span>(<span class="nu">200</span>,<span class="nu">0</span>,GC.<span class="pr">Spread</span>.<span class="pr">Sheets</span>.<span class="pr">VerticalPosition</span>.<span class="pr">top</span>,</div>
<div class="mono" style="left:1293px;top:244px">GC.<span class="pr">Spread</span>.<span class="pr">Sheets</span>.<span class="pr">HorizontalPosition</span>.<span class="pr">left</span>)</div>
<div class="mono un" style="left:1293px;top:263px">undefined</div>
<div class="mono" style="left:1293px;top:284px">sheet.<span class="pr">showCell</span>(<span class="nu">199</span>,<span class="nu">0</span>,GC.<span class="pr">Spread</span>.<span class="pr">Sheets</span>.<span class="pr">VerticalPosition</span>.<span class="pr">top</span>,</div>
<div class="mono" style="left:1293px;top:298px">GC.<span class="pr">Spread</span>.<span class="pr">Sheets</span>.<span class="pr">HorizontalPosition</span>.<span class="pr">left</span>)</div>
<div class="mono un" style="left:1293px;top:317px">undefined</div>
<svg class="a" style="left:1268px;top:65px" width="30" height="300"><g fill="none" stroke="#9aa0a6" stroke-width="1.2">
<path d="M11,7.5 L14.5,11 L11,14.5"/>
<path d="M13,54.5 L9.5,58 L13,61.5"/>
<path d="M11,74.5 L14.5,78 L11,81.5"/>
<path d="M13,93.5 L9.5,97 L13,100.5"/>
<path d="M11,114.5 L14.5,118 L11,121.5"/>
<path d="M13,147.5 L9.5,151 L13,154.5"/>
<path d="M11,167.5 L14.5,171 L11,174.5"/>
<path d="M13,200.5 L9.5,204 L13,207.5"/>
<path d="M11,221.5 L14.5,225 L11,228.5"/>
<path d="M13,254.5 L9.5,258 L13,261.5"/>
</g><g fill="#9aa0a6">
<rect x="15" y="57.2" width="1.6" height="1.6"/>
<rect x="15" y="96.2" width="1.6" height="1.6"/>
<rect x="15" y="150.2" width="1.6" height="1.6"/>
<rect x="15" y="203.2" width="1.6" height="1.6"/>
<rect x="15" y="257.2" width="1.6" height="1.6"/>
</g>
<path d="M11,273.5 L14.5,277 L11,280.5" fill="none" stroke="#4aa3df" stroke-width="1.2"/>
</svg>
<svg class="a" style="left:1694px;top:883px" width="14" height="14"><path d="M0.6,0.6 L0.6,17 L4.5,13 L7.5,19 L9.5,18 L6.5,12 L12,12z" fill="#fff" stroke="#000" stroke-width="1.1"/></svg>
</body></html>
